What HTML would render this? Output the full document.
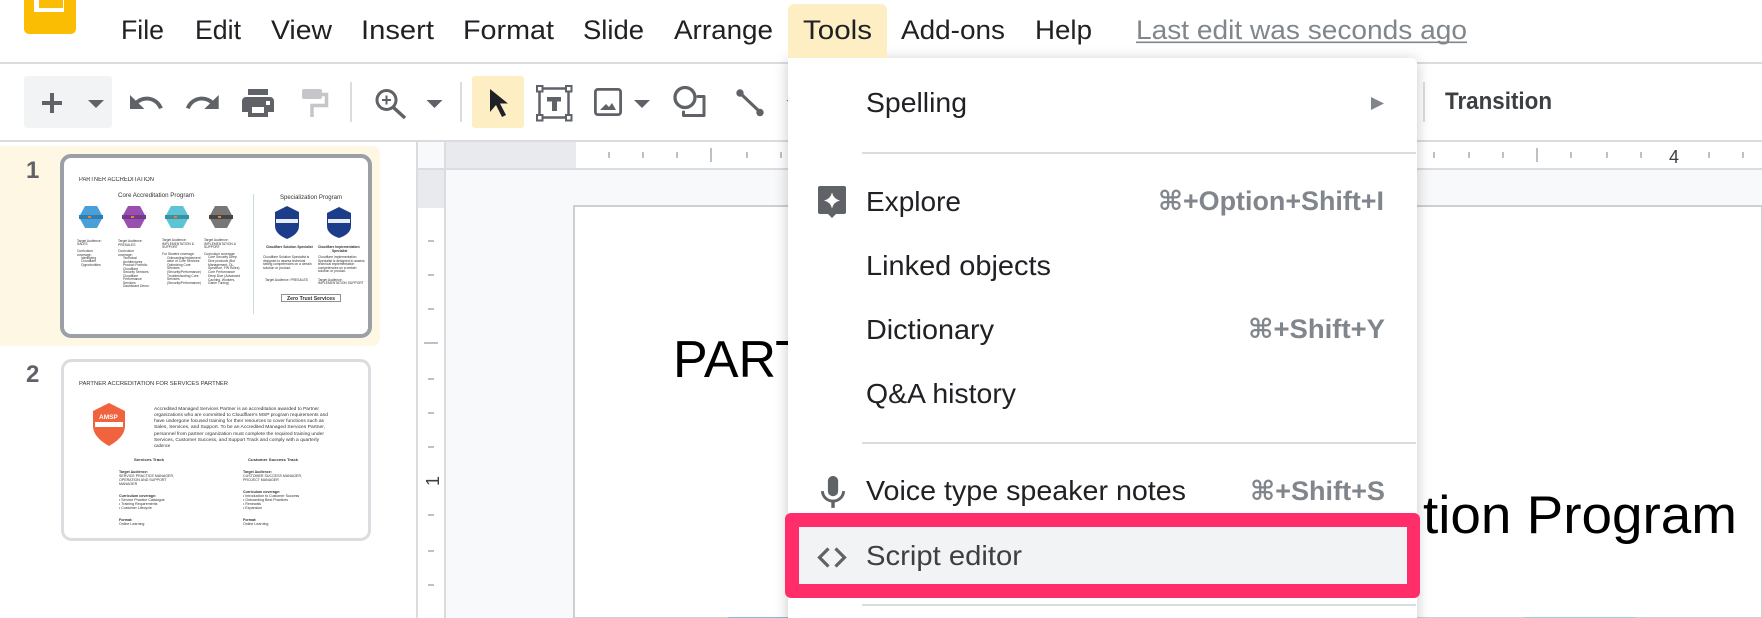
<!DOCTYPE html>
<html><head><meta charset="utf-8"><style>
html,body{margin:0;padding:0;background:#fff;width:1762px;height:618px;overflow:hidden}
svg{display:block;font-family:"Liberation Sans","DejaVu Sans",sans-serif}
.m{font-size:27px;fill:#202124}
.d{font-size:27.5px;fill:#202124}
.s{font-size:27px;fill:#80868b;font-weight:bold}
.i{fill:#5f6368}
</style></head><body>
<svg width="1762" height="618" viewBox="0 0 1762 618" xmlns="http://www.w3.org/2000/svg">
<defs>
<filter id="sh" x="-5%" y="-5%" width="110%" height="110%"><feDropShadow dx="0" dy="2" stdDeviation="7" flood-color="#000" flood-opacity=".22"/></filter>
<filter id="bl" x="0" y="0" width="100%" height="100%"><feGaussianBlur stdDeviation=".35"/></filter>
</defs>
<rect width="1762" height="618" fill="#fff"/>
<!-- logo -->
<path d="M24 0H76V29a5 5 0 0 1-5 5H29a5 5 0 0 1-5-5Z" fill="#fbbc04"/>
<rect x="34" y="0" width="30" height="12" fill="#fff"/><rect x="39" y="0" width="24" height="8" fill="#fbbc04"/>
<!-- menubar -->
<text class="m" x="121" y="39" textLength="43" lengthAdjust="spacingAndGlyphs">File</text>
<text class="m" x="195" y="39" textLength="46" lengthAdjust="spacingAndGlyphs">Edit</text>
<text class="m" x="271" y="39" textLength="61" lengthAdjust="spacingAndGlyphs">View</text>
<text class="m" x="361" y="39" textLength="73" lengthAdjust="spacingAndGlyphs">Insert</text>
<text class="m" x="463" y="39" textLength="91" lengthAdjust="spacingAndGlyphs">Format</text>
<text class="m" x="583" y="39" textLength="61" lengthAdjust="spacingAndGlyphs">Slide</text>
<text class="m" x="674" y="39" textLength="99" lengthAdjust="spacingAndGlyphs">Arrange</text>
<text class="m" x="901" y="39" textLength="104" lengthAdjust="spacingAndGlyphs">Add-ons</text>
<text class="m" x="1035" y="39" textLength="57" lengthAdjust="spacingAndGlyphs">Help</text>
<text x="1136" y="39" font-size="27" fill="#80868b" textLength="331" lengthAdjust="spacingAndGlyphs">Last edit was seconds ago</text>
<rect x="1136" y="41.5" width="331" height="1.6" fill="#80868b"/>
<rect x="0" y="62" width="1762" height="2" fill="#dadce0"/>
<rect x="0" y="140" width="1762" height="2" fill="#dadce0"/>
<!-- toolbar -->
<rect x="24" y="76" width="88" height="52" rx="3" fill="#f1f3f4"/>
<rect x="42" y="101" width="20" height="4" class="i"/><rect x="50" y="93" width="4" height="20" class="i"/>
<path class="i" d="M88 100h16l-8 8z"/>
<path class="i" transform="translate(126.8 84.2) scale(1.6 1.55)" d="M12.5 8c-2.65 0-5.05.99-6.9 2.6L2 7v9h9l-3.62-3.62c1.39-1.16 3.16-1.88 5.12-1.88 3.54 0 6.55 2.31 7.6 5.5l2.37-.78C21.08 11.03 17.15 8 12.5 8z"/>
<path class="i" transform="translate(183.5 84.2) scale(1.6 1.55)" d="M18.4 10.6C16.55 8.99 14.15 8 11.5 8c-4.65 0-8.58 3.03-9.96 7.22L3.9 16c1.05-3.19 4.05-5.5 7.6-5.5 1.95 0 3.73.72 5.12 1.88L13 16h9V7l-3.6 3.6z"/>
<rect x="248" y="89" width="20" height="6" class="i"/>
<path class="i" d="M246 97H270a4 4 0 0 1 4 4V112H268V117H248V112H242V101a4 4 0 0 1 4-4Z"/>
<rect x="252" y="107" width="12" height="6" fill="#fff"/><rect x="266" y="101" width="4" height="4" fill="#fff"/>
<rect x="302" y="89" width="20" height="10" rx="2" fill="#c4c6c9"/>
<path d="M322 94.500H326.500V105.500H312V117" fill="none" stroke="#c4c6c9" stroke-width="3.500"/>
<rect x="350" y="82" width="2" height="40" fill="#dadce0"/>
<circle cx="386.500" cy="100" r="9.500" fill="none" stroke="#5f6368" stroke-width="3"/>
<path d="M393.500 107.500l11.500 10.500" stroke="#5f6368" stroke-width="3.500" fill="none"/>
<path d="M382 100h9M386.500 95.500v9" stroke="#5f6368" stroke-width="2" fill="none"/>
<path class="i" d="M426.500 100h16l-8 8z"/>
<rect x="460" y="82" width="2" height="40" fill="#dadce0"/>
<rect x="472" y="76" width="52" height="52" rx="3" fill="#fdefc3"/>
<path fill="#202124" d="M490 89L508 103.500H500L506 115L502 117L496 105L490 112Z"/>
<rect x="539.500" y="88.500" width="29" height="29" fill="none" stroke="#5f6368" stroke-width="2.500"/>
<g fill="#fff" stroke="#5f6368" stroke-width="2"><rect x="537" y="86" width="5.500" height="5.500"/><rect x="566" y="86" width="5.500" height="5.500"/><rect x="537" y="115" width="5.500" height="5.500"/><rect x="566" y="115" width="5.500" height="5.500"/></g>
<path class="i" d="M547 97H561V101.500H557V111H552V101.500H547Z"/>
<rect x="595.400" y="89.400" width="25.200" height="25.200" rx="2.500" fill="none" stroke="#5f6368" stroke-width="2.800"/>
<path class="i" d="M600 110L606 104L609 107L612 103L616 110Z"/>
<path class="i" d="M634 100h16l-8 8z"/>
<circle cx="685" cy="97.500" r="10" fill="none" stroke="#5f6368" stroke-width="3.300"/>
<path d="M698 96.500H704V115.500H683.500V112" fill="none" stroke="#5f6368" stroke-width="3" stroke-linejoin="round" stroke-linecap="round"/>
<path d="M740 93L760 112" stroke="#5f6368" stroke-width="3.200"/>
<circle cx="740" cy="93" r="3.700" class="i"/><circle cx="760" cy="112.500" r="3.700" class="i"/>
<path class="i" d="M786.500 100h16l-8 8z"/>
<rect x="1423" y="82" width="2" height="40" fill="#dadce0"/>
<text x="1445" y="109" font-size="24" font-weight="bold" fill="#3c4043" textLength="107" lengthAdjust="spacingAndGlyphs">Transition</text>
<!-- left panel -->
<path d="M0 146H372a8 8 0 0 1 8 8V338a8 8 0 0 1-8 8H0Z" fill="#fdf7e3"/>
<text x="26" y="178" font-size="24" font-weight="bold" fill="#5f6368">1</text>
<text x="26" y="382" font-size="24" font-weight="bold" fill="#5f6368">2</text>
<rect x="62" y="156" width="308" height="180" rx="9" fill="#fff" stroke="#9aa0a6" stroke-width="4"/>
<rect x="62.500" y="360.500" width="307" height="179" rx="9" fill="#fff" stroke="#dadce0" stroke-width="3"/>
<g filter="url(#bl)" fill="#333">
<text x="79" y="181" font-size="6" textLength="75" lengthAdjust="spacingAndGlyphs">PARTNER ACCREDITATION</text>
<text x="118" y="197" font-size="6.500" textLength="76" lengthAdjust="spacingAndGlyphs">Core Accreditation Program</text>
<text x="280" y="199" font-size="6.500" textLength="62" lengthAdjust="spacingAndGlyphs">Specialization Program</text>
<rect x="253" y="194" width="1" height="120" fill="#c9dcd8"/>
<path d="M85 206h12l6 11-6 11H85l-6-11z" fill="#4a9fd8"/><rect x="79" y="215" width="24" height="4" fill="#2f7fb0"/>
<path d="M128 206h12l6 11-6 11h-12l-6-11z" fill="#9a4fb0"/><rect x="122" y="215" width="24" height="4" fill="#6f3a8a"/>
<path d="M171 206h12l6 11-6 11h-12l-6-11z" fill="#5cc4d4"/><rect x="165" y="215" width="24" height="4" fill="#3a8f9f"/>
<path d="M215 206h12l6 11-6 11h-12l-6-11z" fill="#777"/><rect x="209" y="215" width="24" height="4" fill="#444"/>
<rect x="88" y="216" width="3" height="2" fill="#f38020"/><rect x="131" y="216" width="3" height="2" fill="#f38020"/><rect x="174" y="216" width="3" height="2" fill="#f38020"/><rect x="218" y="216" width="3" height="2" fill="#f38020"/>
<path d="M287 206l12 6v14q0 8-12 13q-12-5-12-13v-14z" fill="#1f3e8a"/><rect x="276" y="219" width="22" height="4" fill="#e8ecf5"/>
<path d="M339 207l12 6v13q0 8-12 12q-12-4-12-12v-13z" fill="#1f3e8a"/><rect x="328" y="219" width="22" height="4" fill="#e8ecf5"/>
<g font-size="3.300">
<text x="77" y="242">Target Audience:</text><text x="77" y="245">SALES</text><text x="77" y="252">Curriculum</text><text x="77" y="256">coverage:</text><text x="81" y="259">Identifying</text><text x="81" y="262">Cloudflare</text><text x="81" y="266">Opportunities</text>
<text x="118" y="242">Target Audience:</text><text x="118" y="246">PRESALES</text><text x="118" y="252">Curriculum</text><text x="118" y="256">coverage:</text><text x="123" y="259">Technical</text><text x="123" y="263">Architectures</text><text x="123" y="266">Product Portfolio</text><text x="123" y="270">Cloudflare</text><text x="123" y="273">Security Services</text><text x="123" y="277">Cloudflare</text><text x="123" y="280">Performance</text><text x="123" y="284">Services</text><text x="123" y="287">Dashboard Demo</text>
<text x="162" y="241">Target Audience:</text><text x="162" y="245">IMPLEMENTATION &amp;</text><text x="162" y="248">SUPPORT</text><text x="162" y="255">For Student coverage:</text><text x="167" y="259">Onboarding/Implement</text><text x="167" y="262">ation of Core Services</text><text x="167" y="266">Optimizing Core</text><text x="167" y="269">Services</text><text x="167" y="273">(Security/Performance)</text><text x="167" y="277">Troubleshooting Core</text><text x="167" y="280">Services</text><text x="167" y="284">(Security/Performance)</text>
<text x="204" y="241">Target Audience:</text><text x="204" y="245">IMPLEMENTATION &amp;</text><text x="204" y="248">SUPPORT</text><text x="204" y="255">Curriculum coverage:</text><text x="208" y="258">Core Security Deep</text><text x="208" y="262">Dive products (Bot</text><text x="208" y="266">Management, DL,</text><text x="208" y="269">Spectrum, FW Rules)</text><text x="208" y="273">Core Performance</text><text x="208" y="277">Deep Dive (Advanced</text><text x="208" y="281">Caching, Workers,</text><text x="208" y="284">Game Tuning)</text>
<text x="266" y="248" font-weight="bold">Cloudflare Solution Specialist</text><text x="318" y="248" font-weight="bold">Cloudflare Implementation</text><text x="332" y="252" font-weight="bold">Specialist</text>
<text x="263" y="258">Cloudflare Solution Specialist is</text><text x="263" y="262">designed to assess technical</text><text x="263" y="265">selling competencies on a certain</text><text x="263" y="269">solution or product.</text>
<text x="318" y="258">Cloudflare Implementation</text><text x="318" y="262">Specialist is designed to assess</text><text x="318" y="265">technical implementation</text><text x="318" y="269">competencies on a certain</text><text x="318" y="272">solution or product.</text>
<text x="265" y="281">Target Audience: PRESALES</text><text x="318" y="281">Target Audience:</text><text x="318" y="284">IMPLEMENTATION SUPPORT</text>
</g>
<rect x="281.500" y="294.500" width="59" height="7" fill="#fff" stroke="#777" stroke-width=".8"/>
<text x="287" y="300" font-size="5" font-weight="bold" textLength="48" lengthAdjust="spacingAndGlyphs">Zero Trust Services</text>
<!-- thumb 2 -->
<text x="79" y="385" font-size="5.500" textLength="149" lengthAdjust="spacingAndGlyphs">PARTNER ACCREDITATION FOR SERVICES PARTNER</text>
<path d="M109 403l16 8v15q0 11-16 20q-16-9-16-20v-15z" fill="#f0643c"/>
<text x="99" y="419" font-size="6.500" font-weight="bold" fill="#fff">AMSP</text><rect x="95" y="422" width="28" height="5" fill="#fff"/>
<g font-size="4.300">
<text x="154" y="410" textLength="165" lengthAdjust="spacingAndGlyphs">Accredited Managed Services Partner is an accreditation awarded to Partner</text>
<text x="154" y="416" textLength="174" lengthAdjust="spacingAndGlyphs">organizations who are committed to Cloudflare's MSP program requirements and</text>
<text x="154" y="422" textLength="170" lengthAdjust="spacingAndGlyphs">have undergone focused training for their resources to cover functions such as</text>
<text x="154" y="428" textLength="171" lengthAdjust="spacingAndGlyphs">Sales, Services, and Support. To be an Accredited Managed Services Partner,</text>
<text x="154" y="435" textLength="170" lengthAdjust="spacingAndGlyphs">personnel from partner organization must complete the required training under</text>
<text x="154" y="441" textLength="165" lengthAdjust="spacingAndGlyphs">Services, Customer Success, and Support Track and comply with a quarterly</text>
<text x="154" y="447">cadence</text>
</g>
<g font-size="3.600">
<text x="134" y="461" font-weight="bold" textLength="30" lengthAdjust="spacingAndGlyphs">Services Track</text>
<text x="248" y="461" font-weight="bold" textLength="50" lengthAdjust="spacingAndGlyphs">Customer Success Track</text>
<text x="119" y="473" font-weight="bold">Target Audience:</text><text x="119" y="477">SERVICE PRACTICE MANAGER,</text><text x="119" y="481">OPERATION AND SUPPORT</text><text x="119" y="485">MANAGER</text>
<text x="119" y="497" font-weight="bold">Curriculum coverage:</text><text x="119" y="501">•  Service Practice Catalogue</text><text x="119" y="505">•  Training Requirements</text><text x="119" y="509">•  Customer Lifecycle</text>
<text x="119" y="521" font-weight="bold">Format:</text><text x="119" y="525">Online Learning</text>
<text x="243" y="473" font-weight="bold">Target Audience:</text><text x="243" y="477">CUSTOMER SUCCESS MANAGER,</text><text x="243" y="481">PROJECT MANAGER</text>
<text x="243" y="493" font-weight="bold">Curriculum coverage:</text><text x="243" y="497">•  Introduction to Customer Success</text><text x="243" y="501">•  Onboarding Best Practices</text><text x="243" y="505">•  Renewals</text><text x="243" y="509">•  Expansion</text>
<text x="243" y="521" font-weight="bold">Format:</text><text x="243" y="525">Online Learning</text>
</g>
</g>
<!-- canvas + rulers -->
<rect x="418" y="142" width="1344" height="27" fill="#fff"/>
<rect x="418" y="142" width="27" height="27" fill="#f8f9fa"/>
<rect x="445" y="142" width="131" height="27" fill="#e8eaed"/>
<rect x="446" y="170" width="1316" height="448" fill="#f8f9fa"/>
<rect x="418" y="170" width="27" height="448" fill="#fff"/>
<rect x="418" y="170" width="27" height="38" fill="#e8eaed"/>
<rect x="416" y="142" width="2" height="476" fill="#dadce0"/>
<rect x="444" y="142" width="2" height="476" fill="#dadce0"/>
<rect x="418" y="168" width="1344" height="2" fill="#dadce0"/>
<rect x="574" y="206" width="1188" height="412" fill="#fff" stroke="#cfcfcf" stroke-width="2"/>
<g fill="#bdc1c6">
<rect x="608" y="152" width="2" height="6"/><rect x="642" y="152" width="2" height="6"/><rect x="676" y="152" width="2" height="6"/><rect x="710" y="148" width="2" height="14"/><rect x="746" y="152" width="2" height="6"/><rect x="780" y="152" width="2" height="6"/>
<rect x="1433" y="152" width="2" height="6"/><rect x="1468" y="152" width="2" height="6"/><rect x="1502" y="152" width="2" height="6"/><rect x="1536" y="148" width="2" height="14"/><rect x="1570" y="152" width="2" height="6"/><rect x="1606" y="152" width="2" height="6"/><rect x="1640" y="152" width="2" height="6"/><rect x="1708" y="152" width="2" height="6"/><rect x="1742" y="152" width="2" height="6"/>
<rect x="428" y="240" width="6" height="2"/><rect x="428" y="274" width="6" height="2"/><rect x="428" y="308" width="6" height="2"/><rect x="424" y="342" width="14" height="2"/><rect x="428" y="378" width="6" height="2"/><rect x="428" y="412" width="6" height="2"/><rect x="428" y="446" width="6" height="2"/><rect x="428" y="514" width="6" height="2"/><rect x="428" y="550" width="6" height="2"/><rect x="428" y="584" width="6" height="2"/>
</g>
<text x="1669" y="163" font-size="18" fill="#3c4043">4</text>
<text transform="translate(439 486) rotate(-90)" font-size="18" fill="#3c4043">1</text>
<text x="673" y="377" font-size="52" fill="#000">PARTNER</text>
<text x="1423" y="533" font-size="53" fill="#000" textLength="314" lengthAdjust="spacingAndGlyphs">tion Program</text>
<rect x="728" y="617" width="60" height="1" fill="#8fb8d8"/>
<rect x="1525" y="617" width="110" height="1" fill="#9fd0d0"/>
<!-- dropdown -->
<path d="M788 58H1411a6 6 0 0 1 6 6V630H788Z" fill="#fff" filter="url(#sh)"/>
<path d="M788 10a6 6 0 0 1 6-6h87a6 6 0 0 1 6 6v48H788Z" fill="#fdefc3"/>
<text class="m" x="803" y="39" textLength="69" lengthAdjust="spacingAndGlyphs">Tools</text>
<text class="d" x="866" y="112" textLength="101" lengthAdjust="spacingAndGlyphs">Spelling</text>
<path fill="#80868b" d="M1371 97l13 6.500-13 6.500z"/>
<rect x="862" y="152" width="554" height="2" fill="#dadce0"/>
<path class="i" d="M820 186h24a2 2 0 0 1 2 2v24a2 2 0 0 1-2 2h-8l-4 4-4-4h-8a2 2 0 0 1-2-2v-24a2 2 0 0 1 2-2Z"/>
<path fill="#fff" d="M832 192.500q1.500 6.500 8 8q-6.500 1.500-8 8q-1.500-6.500-8-8q6.500-1.500 8-8Z"/>
<text class="d" x="866" y="211" textLength="95" lengthAdjust="spacingAndGlyphs">Explore</text>
<text class="s" x="1158" y="210" textLength="226" lengthAdjust="spacingAndGlyphs">⌘+Option+Shift+I</text>
<text class="d" x="866" y="275" textLength="185" lengthAdjust="spacingAndGlyphs">Linked objects</text>
<text class="d" x="866" y="339" textLength="128" lengthAdjust="spacingAndGlyphs">Dictionary</text>
<text class="s" x="1248" y="338" textLength="137" lengthAdjust="spacingAndGlyphs">⌘+Shift+Y</text>
<text class="d" x="866" y="403" textLength="150" lengthAdjust="spacingAndGlyphs">Q&amp;A history</text>
<rect x="862" y="442" width="554" height="2" fill="#dadce0"/>
<path class="i" transform="translate(812.500 472.600) scale(1.710 1.680)" d="M12 14c1.660 0 3-1.340 3-3V5c0-1.660-1.340-3-3-3S9 3.340 9 5v6c0 1.660 1.340 3 3 3zm5.300-3c0 3-2.540 5.100-5.300 5.100S6.700 14 6.700 11H5c0 3.410 2.720 6.230 6 6.720V21h2v-3.280c3.280-.48 6-3.300 6-6.720h-1.700z"/>
<text class="d" x="866" y="500" textLength="320" lengthAdjust="spacingAndGlyphs">Voice type speaker notes</text>
<text class="s" x="1250" y="500" textLength="135" lengthAdjust="spacingAndGlyphs">⌘+Shift+S</text>
<rect x="862" y="604" width="554" height="2" fill="#dadce0"/>
<!-- highlight -->
<rect x="785" y="513" width="635" height="85" rx="6" fill="#ff2e6a"/>
<rect x="799" y="527" width="608" height="57" fill="#f1f3f4"/>
<path d="M828.500 548.500L819.500 557.500L828.500 566.500M835.500 548.500L844.500 557.500L835.500 566.500" fill="none" stroke="#5f6368" stroke-width="3.200"/>
<text x="866" y="565" font-size="27.500" fill="#3c4043" textLength="156" lengthAdjust="spacingAndGlyphs">Script editor</text>
</svg>
</body></html>
